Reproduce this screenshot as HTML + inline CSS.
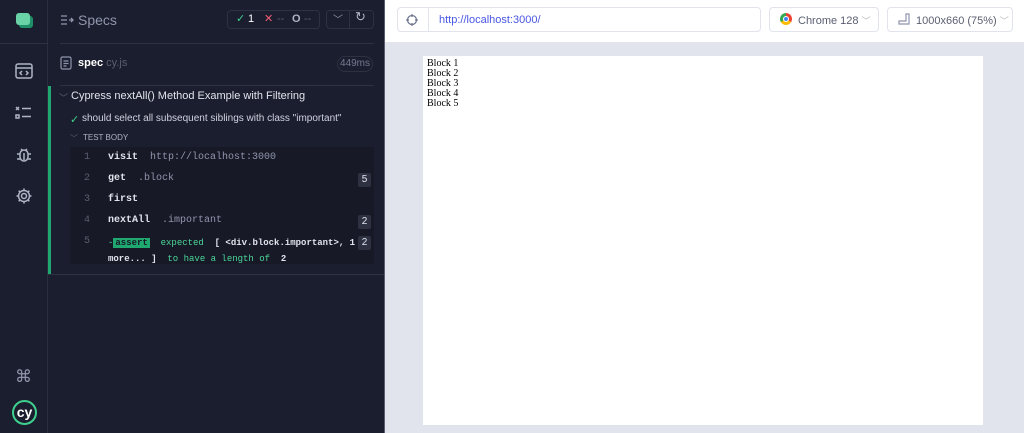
<!DOCTYPE html>
<html><head><style>
*{margin:0;padding:0;box-sizing:border-box}
body{width:1024px;height:433px;overflow:hidden;background:#1b1e2e;font-family:"Liberation Sans",sans-serif;position:relative}
.abs{position:absolute}
.mono{font-family:"Liberation Mono",monospace}
</style></head><body>
<div class="abs" style="left:0;top:0;width:48px;height:433px;background:#1b1e2e;border-right:1px solid #2a2d3e"></div>
<div class="abs" style="left:0;top:43px;width:48px;height:1px;background:#2e3142"></div>
<div class="abs" style="left:19px;top:16px;width:14px;height:12px;background:#1f8f6a;border-radius:3px"></div>
<div class="abs" style="left:16px;top:13px;width:14px;height:12px;background:#69d3a7;border-radius:3px"></div>
<svg class="abs" style="left:14px;top:62px" width="20" height="18" viewBox="0 0 20 18" fill="none" stroke="#afb3c7" stroke-width="1.5"><rect x="2" y="2" width="16" height="14" rx="2"/><path d="M2 6h16M8 9l-2 2 2 2M12 9l2 2-2 2"/></svg>
<svg class="abs" style="left:14px;top:104px" width="20" height="16" viewBox="0 0 20 16" fill="none" stroke="#afb3c7" stroke-width="1.5"><path d="M2 3l3 3M5 3l-3 3M8 4.5h9M2 11h3v3H2zM8 12.5h9"/></svg>
<svg class="abs" style="left:15px;top:145px" width="18" height="18" viewBox="0 0 18 18" fill="none" stroke="#afb3c7" stroke-width="1.5"><rect x="5" y="5" width="8" height="11" rx="4"/><path d="M6 4l1.5 1.5M12 4l-1.5 1.5M2 9h3M13 9h3M2 14h3M13 14h3M9 8v7"/></svg>
<svg class="abs" style="left:15px;top:187px" width="18" height="18" viewBox="0 0 18 18" fill="none" stroke="#afb3c7" stroke-width="1.5"><circle cx="9" cy="9" r="2.5"/><path d="M9 1.5v2.5M9 14v2.5M1.5 9h2.5M14 9h2.5M3.7 3.7l1.8 1.8M12.5 12.5l1.8 1.8M3.7 14.3l1.8-1.8M12.5 5.5l1.8-1.8"/><circle cx="9" cy="9" r="5.5"/></svg>
<div class="abs" style="left:15px;top:367px;color:#9095ad;font-size:17px">⌘</div>
<div class="abs" style="left:12px;top:400px;width:25px;height:25px;border-radius:50%;border:2px solid #3fcf8e;background:#1b1e2e;color:#fff;font-size:14px;font-weight:bold;text-align:center;line-height:20px">cy</div>

<div class="abs" style="left:384px;top:0;width:1px;height:433px;background:#5a5e70"></div>
<svg class="abs" style="left:60px;top:14px" width="14" height="12" viewBox="0 0 14 12" fill="none" stroke="#9095ad" stroke-width="1.3"><path d="M1 2h6M1 6h6M1 10h6M9 6h4M11 4l2 2-2 2"/></svg>
<div class="abs" style="left:78px;top:12px;color:#9095ad;font-size:14px">Specs</div>
<div class="abs" style="left:227px;top:10px;width:93px;height:19px;border:1px solid #2e3142;border-radius:4px;font-size:11px;line-height:17px;color:#5a5e70">
 <span style="position:absolute;left:8px;color:#3fcf8e">✓</span><span style="position:absolute;left:20px;color:#fff">1</span>
 <span style="position:absolute;left:36px;color:#f25c74">✕</span><span style="position:absolute;left:49px">--</span>
 <span style="position:absolute;left:64px;color:#afb3c7;font-weight:bold">O</span><span style="position:absolute;left:76px">--</span></div>
<div class="abs" style="left:326px;top:10px;width:48px;height:19px;border:1px solid #2e3142;border-radius:4px"></div>
<div class="abs" style="left:349px;top:10px;width:1px;height:19px;background:#2e3142"></div>
<div class="abs" style="left:333px;top:11px;color:#9095ad;font-size:10px">﹀</div>
<div class="abs" style="left:355px;top:9px;color:#afb3c7;font-size:13px">↻</div>
<div class="abs" style="left:60px;top:43px;width:314px;height:1px;background:#2e3142"></div>
<svg class="abs" style="left:60px;top:56px" width="12" height="14" viewBox="0 0 12 14" fill="none" stroke="#9095ad" stroke-width="1.2"><rect x="1" y="1" width="10" height="12" rx="1.5"/><path d="M3.5 5h5M3.5 7.5h5M3.5 10h3"/></svg>
<div class="abs" style="left:78px;top:57px;font-size:11px;color:#fff;font-weight:bold">spec <span style="color:#5a5e70;font-weight:normal">cy.js</span></div>
<div class="abs" style="left:337px;top:56px;width:36px;height:16px;border:1px solid #2e3142;border-radius:8px;color:#757a92;font-size:10px;text-align:center;line-height:14px">449ms</div>
<div class="abs" style="left:60px;top:85px;width:314px;height:1px;background:#2e3142"></div>
<div class="abs" style="left:48px;top:86px;width:3px;height:188px;background:#1fa971"></div>
<div class="abs" style="left:59px;top:91px;color:#5a5e70;font-size:9px">﹀</div>
<div class="abs" style="left:71px;top:90px;color:#e1e3ed;font-size:11px">Cypress nextAll() Method Example with Filtering</div>
<div class="abs" style="left:70px;top:113px;color:#3fcf8e;font-size:11px">✓</div>
<div class="abs" style="left:82px;top:113px;color:#d0d2e0;font-size:10px">should select all subsequent siblings with class "important"</div>
<div class="abs" style="left:70px;top:133px;color:#5a5e70;font-size:8px">﹀</div>
<div class="abs" style="left:83px;top:133px;color:#afb3c7;font-size:8px">TEST BODY</div>
<div class="abs mono" style="left:70px;top:147px;width:304px;height:117px;background:#171926;font-size:10px">
 <div class="abs" style="left:14px;top:5px;color:#5a5e70">1</div><div class="abs" style="left:38px;top:5px;color:#e1e3ed;font-weight:bold">visit <span style="color:#9095ad;font-weight:normal">&nbsp;http://localhost:3000</span></div>
 <div class="abs" style="left:14px;top:26px;color:#5a5e70">2</div><div class="abs" style="left:38px;top:26px;color:#e1e3ed;font-weight:bold">get <span style="color:#9095ad;font-weight:normal">&nbsp;.block</span></div>
 <div class="abs" style="left:288px;top:26px;width:13px;height:14px;background:#2e3142;border-radius:2px;color:#e1e3ed;text-align:center;line-height:14px;font-family:'Liberation Sans'">5</div>
 <div class="abs" style="left:14px;top:47px;color:#5a5e70">3</div><div class="abs" style="left:38px;top:47px;color:#e1e3ed;font-weight:bold">first</div>
 <div class="abs" style="left:14px;top:68px;color:#5a5e70">4</div><div class="abs" style="left:38px;top:68px;color:#e1e3ed;font-weight:bold">nextAll <span style="color:#9095ad;font-weight:normal">&nbsp;.important</span></div>
 <div class="abs" style="left:288px;top:68px;width:13px;height:14px;background:#2e3142;border-radius:2px;color:#e1e3ed;text-align:center;line-height:14px;font-family:'Liberation Sans'">2</div>
 <div class="abs" style="left:14px;top:89px;color:#5a5e70">5</div>
 <div class="abs" style="left:38px;top:88px;color:#4ad89a;line-height:16px;font-size:9px;white-space:nowrap">-<span style="background:#1fa971;color:#171926;padding:0 2px;font-weight:bold">assert</span>&nbsp; expected <span style="color:#e1e3ed;font-weight:bold">&nbsp;[ &lt;div.block.important&gt;, 1</span><br><span style="color:#e1e3ed;font-weight:bold">more... ]</span>&nbsp; to have a length of <span style="color:#e1e3ed;font-weight:bold">&nbsp;2</span></div>
 <div class="abs" style="left:288px;top:89px;width:13px;height:14px;background:#2e3142;border-radius:2px;color:#e1e3ed;text-align:center;line-height:14px;font-family:'Liberation Sans'">2</div>
</div>
<div class="abs" style="left:48px;top:274px;width:336px;height:1px;background:#2e3142"></div>

<div class="abs" style="left:385px;top:0;width:639px;height:433px;background:#e1e3ed"></div>
<div class="abs" style="left:385px;top:0;width:639px;height:43px;background:#fff;border-bottom:1px solid #e1e3ed"></div>
<div class="abs" style="left:397px;top:7px;width:364px;height:25px;border:1px solid #e1e3ed;border-radius:4px"></div>
<div class="abs" style="left:428px;top:8px;width:1px;height:23px;background:#e1e3ed"></div>
<svg class="abs" style="left:405px;top:13px" width="14" height="14" viewBox="0 0 14 14" fill="none" stroke="#747994" stroke-width="1.3"><circle cx="7" cy="7" r="4.5"/><path d="M7 1v3M7 10v3M1 7h3M10 7h3"/></svg>
<div class="abs" style="left:439px;top:14px;color:#4956e3;font-size:11px">http://localhost:3000/</div>
<div class="abs" style="left:769px;top:7px;width:110px;height:25px;border:1px solid #e1e3ed;border-radius:4px"></div>
<div class="abs" style="left:780px;top:13px;width:12px;height:12px;border-radius:50%;background:conic-gradient(#ea4335 0 120deg,#fbbc05 120deg 240deg,#34a853 240deg)"></div>
<div class="abs" style="left:783px;top:16px;width:6px;height:6px;border-radius:50%;background:#4285f4;border:1px solid #fff"></div>
<div class="abs" style="left:798px;top:14px;color:#5a5e70;font-size:11px">Chrome 128 <span style="color:#bbb;font-size:9px">﹀</span></div>
<div class="abs" style="left:887px;top:7px;width:126px;height:25px;border:1px solid #e1e3ed;border-radius:4px"></div>
<svg class="abs" style="left:897px;top:12px" width="14" height="14" viewBox="0 0 14 14" fill="none" stroke="#9095ad" stroke-width="1.2"><path d="M2 12h10V2H9v7H2z"/></svg>
<div class="abs" style="left:916px;top:14px;color:#5a5e70;font-size:11px">1000x660 (75%) <span style="color:#bbb;font-size:9px">﹀</span></div>
<div class="abs" style="left:423px;top:56px;width:560px;height:369px;background:#fff;font-family:'Liberation Serif',serif;font-size:10px;line-height:10px;color:#000;padding:3px 4px">Block 1<br>Block 2<br>Block 3<br>Block 4<br>Block 5</div>
</body></html>
